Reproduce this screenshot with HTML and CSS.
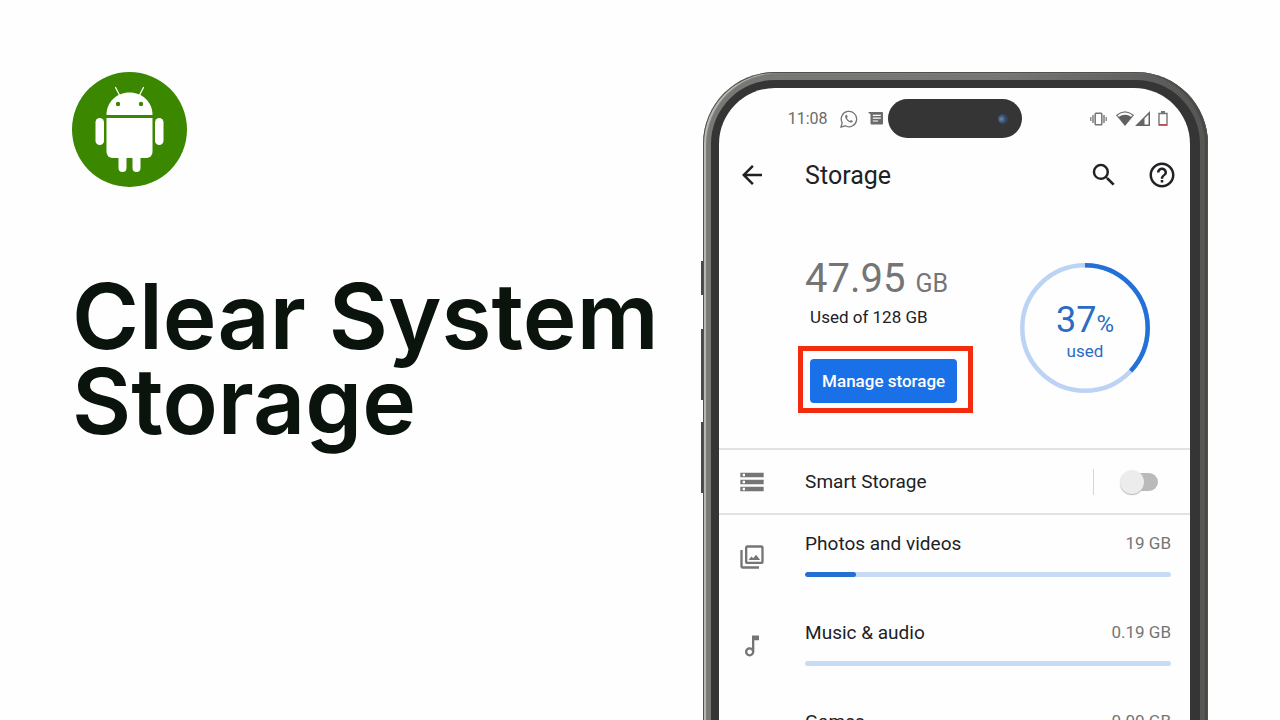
FILE: index.html
```html
<!DOCTYPE html>
<html lang="en">
<head>
<meta charset="utf-8">
<meta name="viewport" content="width=device-width, initial-scale=1">
<title>Clear System Storage</title>
<link rel="stylesheet" href="styles.css">
</head>
<body>
<main class="page">
  <section class="intro">
    <svg class="logo" viewBox="0 0 115 115" role="img" aria-label="Android">
      <circle cx="57.500" cy="57.500" r="57.500" fill="#3b8700"/>
      <g fill="#fff">
        <path d="M34.500 43C34.500 30 44.500 20.500 57.500 20.500S80.500 30 80.500 43Z"/>
        <path d="M34.500 46H80.500V80a6 6 0 0 1-6 6H40.500a6 6 0 0 1-6-6Z"/>
        <rect x="23.500" y="46" width="8.500" height="27" rx="4.250"/>
        <rect x="83" y="46" width="8.500" height="27" rx="4.250"/>
        <path d="M46.500 84H54.500V96a4 4 0 0 1-8 0ZM60.500 84H68.500V96a4 4 0 0 1-8 0Z"/>
      </g>
      <path d="M43.500 15.500L47.500 23M71.500 15.500L67.500 23" stroke="#fff" stroke-width="1.300" stroke-linecap="round"/>
      <circle cx="46" cy="32" r="2.200" fill="#3b8700"/><circle cx="69" cy="32" r="2.200" fill="#3b8700"/>
    </svg>
    <h1 class="headline">Clear System Storage</h1>
  </section>

  <section class="phone">
    <span class="side-key side-key-action"></span>
    <span class="side-key side-key-up"></span>
    <span class="side-key side-key-down"></span>
    <div class="bezel">
      <div class="screen">
        <div class="status">
          <div class="status-left">
            <span class="clock">11:08</span>
            <svg class="icon-18" viewBox="0 0 18 18" fill="none" stroke="#757575">
              <path d="M1 17L2.200 12.800A7.700 7.700 0 1 1 5.200 15.800Z" stroke-width="1.300"/>
              <path d="M6.200 4.700c-1.200.5-1.400 2-.6 3.500 1 1.900 2.400 3.300 4.200 4.100 1.500.6 2.800.2 3.100-1.200l-2-1.200-1 1c-1.300-.5-2.300-1.500-3-2.900l.8-.9-.8-2.200Z" fill="#757575" stroke="none"/>
            </svg>
            <svg class="icon-15" viewBox="0 0 15 13" fill="#6b6b6b">
              <path fill-rule="evenodd" d="M0 0H14a1 1 0 0 1 1 1V11.500a1 1 0 0 1-1 1H3.500a1 1 0 0 1-1-1V2.500ZM4.800 2.800V3.900H12.800V2.800ZM4.800 5.600V6.700H12.800V5.600ZM4.800 8.400V9.500H10V8.400Z"/>
            </svg>
          </div>
          <div class="island"><span class="lens"></span></div>
          <div class="status-right">
            <svg class="icon-17" viewBox="0 0 17 14" fill="none" stroke="#757575">
              <rect x="5.200" y="1.200" width="6.600" height="11.600" rx=".8" stroke-width="1.500"/>
              <path d="M3 3V11M14 3V11" stroke-width="1.400"/><path d="M.8 5V9M16.200 5V9" stroke-width="1.200"/>
            </svg>
            <svg class="icon-wifi" viewBox="0 0 18 15">
              <path d="M.8 4.200Q9-2.600 17.200 4.200L9 14Z" fill="none" stroke="#757575" stroke-width="1.200"/>
              <path d="M2.500 6Q9 1.500 15.500 6L9 14.500Z" fill="#606060"/>
            </svg>
            <svg class="icon-signal" viewBox="0 0 15 15">
              <path d="M0 15L15 0V15ZM9.500 7.500V13.500H13.500V3.500Z" fill="#666" fill-rule="evenodd"/>
            </svg>
            <svg class="icon-battery" viewBox="0 0 10 15">
              <path d="M1 2.500H9V14H1Z" fill="none" stroke="#757575" stroke-width="1.400"/>
              <path d="M3 0H7V2H3Z" fill="#757575"/><path d="M1 13H9V14.700H1Z" fill="#b5564e"/>
            </svg>
          </div>
        </div>

        <header class="appbar">
          <button class="icon-button" type="button" aria-label="Back">
            <svg class="icon-30" viewBox="0 0 24 24" fill="#202124"><path d="M20 11H7.830l5.590-5.590L12 4l-8 8 8 8 1.410-1.410L7.830 13H20v-2z"/></svg>
          </button>
          <h2 class="appbar-title">Storage</h2>
          <button class="icon-button" type="button" aria-label="Search">
            <svg class="icon-30" viewBox="0 0 24 24" fill="#202124"><path d="M15.500 14h-.79l-.28-.27A6.471 6.471 0 0 0 16 9.500 6.500 6.500 0 1 0 9.500 16c1.610 0 3.090-.59 4.230-1.570l.27.28v.79l5 4.990L20.490 19l-4.990-5zm-6 0C7.010 14 5 11.990 5 9.500S7.010 5 9.500 5 14 7.010 14 9.500 11.990 14 9.500 14z"/></svg>
          </button>
          <button class="icon-button" type="button" aria-label="Help">
            <svg class="icon-30" viewBox="0 0 24 24" fill="#202124"><path d="M11 18h2v-2h-2v2zm1-16C6.480 2 2 6.480 2 12s4.480 10 10 10 10-4.480 10-10S17.520 2 12 2zm0 18c-4.410 0-8-3.590-8-8s3.590-8 8-8 8 3.590 8 8-3.590 8-8 8zm0-14c-2.210 0-4 1.790-4 4h2c0-1.100.9-2 2-2s2 .9 2 2c0 2-3 1.750-3 5h2c0-2.250 3-2.500 3-5 0-2.210-1.790-4-4-4z"/></svg>
          </button>
        </header>

        <section class="summary">
          <div class="usage">
            <p class="amount">47.95 <span class="unit">GB</span></p>
            <p class="capacity">Used of 128 GB</p>
            <div class="highlight"><button class="manage" type="button">Manage storage</button></div>
          </div>
          <div class="gauge">
            <svg class="gauge-ring" viewBox="0 0 130 130" fill="none" stroke-width="4.500">
              <circle cx="65" cy="65" r="62.700" stroke="#bcd3f3"/>
              <circle cx="65" cy="65" r="62.700" stroke="#2371d8" pathLength="100" stroke-dasharray="37 63" transform="rotate(-90 65 65)"/>
            </svg>
            <p class="percent">37<span class="percent-sign">%</span></p>
            <p class="gauge-label">used</p>
          </div>
        </section>

        <div class="smart">
          <svg class="icon-row" viewBox="0 0 24 24" fill="#757575"><path d="M2 20h20v-4H2v4zm2-3h2v2H4v-2zM2 4v4h20V4H2zm4 3H4V5h2v2zm-4 7h20v-4H2v4zm2-3h2v2H4v-2z"/></svg>
          <label class="row-title" for="smart">Smart Storage</label>
          <span class="rule"></span>
          <input class="switch" type="checkbox" id="smart">
        </div>

        <ul class="categories">
          <li class="category">
            <svg class="icon-row" viewBox="0 0 24 24" fill="#757575"><path d="M20 4v12H8V4h12m0-2H8c-1.100 0-2 .9-2 2v12c0 1.100.9 2 2 2h12c1.100 0 2-.9 2-2V4c0-1.100-.9-2-2-2zM2 6v14c0 1.100.9 2 2 2h14v-2H4V6H2zM9 14.500l2.500-3 1.500 1.500 2.500-3 3.500 4.500Z"/></svg>
            <div class="category-body">
              <div class="category-text"><label class="row-title" for="photos">Photos and videos</label><span class="size">19 GB</span></div>
              <progress class="meter" id="photos" max="100" value="14"></progress>
            </div>
          </li>
          <li class="category">
            <svg class="icon-row" viewBox="0 0 24 24" fill="#757575"><path d="M12 3l.01 10.550c-.59-.34-1.270-.55-2-.55C7.790 13 6 14.790 6 17s1.790 4 4.010 4S14 19.210 14 17V7h4V3h-6zm-1.990 16c-1.100 0-2-.9-2-2s.9-2 2-2 2 .9 2 2-.9 2-2 2z"/></svg>
            <div class="category-body">
              <div class="category-text"><label class="row-title" for="music">Music &amp; audio</label><span class="size">0.19 GB</span></div>
              <progress class="meter" id="music" max="100" value="0"></progress>
            </div>
          </li>
          <li class="category">
            <svg class="icon-row" viewBox="0 0 24 24" fill="#757575"><path d="M2 7H22V17H2ZM6 9V11H4V13H6V15H8V13H10V11H8V9Z" fill-rule="evenodd"/></svg>
            <div class="category-body">
              <div class="category-text"><label class="row-title" for="games">Games</label><span class="size">0.00 GB</span></div>
              <progress class="meter" id="games" max="100" value="0"></progress>
            </div>
          </li>
        </ul>
      </div>
    </div>
  </section>
</main>
</body>
</html>
```
FILE: styles.css
```css
* { box-sizing: border-box; }

body {
  margin: 0;
  background: #fefefe;
  font-family: Roboto, "Liberation Sans", sans-serif;
  color: #202124;
}

h1, h2, p, ul { margin: 0; padding: 0; }
svg { display: block; flex: none; }

.page {
  display: grid;
  grid-template-columns: minmax(0, 5fr) minmax(0, 4fr);
  align-items: start;
  height: 100vh;
  padding: 72px 72px 0;
  overflow: hidden;
}

.logo { width: 115px; height: 115px; }

.headline {
  margin-top: 87px;
  font-family: Inter, "Liberation Sans", sans-serif;
  font-size: 91px;
  font-weight: 600;
  line-height: 85px;
  color: #0b130d;
}

/* Phone body */
.phone {
  position: relative;
  padding: 8px;
  border-radius: 72px;
  background: linear-gradient(to right, #777974, #767774 60%, #555653);
  box-shadow: inset 0 0 0 1px #50514e, inset 3px 1px 1px 0 #b9bab6, inset -3px 0 1px 0 #484946;
}

.bezel {
  padding: 8px 10px 8px 8px;
  border-radius: 64px;
  background: #353535;
}

.screen {
  padding-bottom: 60px;
  border-radius: 56px;
  background: #fefefe;
}

.side-key {
  position: absolute;
  left: -2px;
  width: 2px;
  height: 71px;
  background: #484848;
}
.side-key-action { top: 189px; height: 34px; }
.side-key-up { top: 257px; }
.side-key-down { top: 350px; }

/* Status bar */
.status {
  display: grid;
  grid-template-columns: 1fr auto 1fr;
  align-items: center;
  padding-top: 11px;
}
.status-left, .status-right {
  display: flex;
  align-items: center;
  justify-content: flex-end;
}
.status-left { gap: 10px; padding-right: 5px; }
.status-right { padding-right: 22px; }
.clock { margin-right: 2px; font-size: 16px; color: #6b6b6b; }

.island {
  display: flex;
  align-items: center;
  justify-content: flex-end;
  width: 134px;
  height: 39px;
  padding-right: 14px;
  border-radius: 20px;
  background: #353535;
}
.lens {
  width: 10px;
  height: 10px;
  border-radius: 50%;
  background: radial-gradient(circle at 35% 50%, #6f89a4, #34496b 50%, #2b3547);
}

.icon-15 { width: 15px; height: 13px; }
.icon-17 { width: 17px; height: 14px; }
.icon-18 { width: 18px; height: 18px; }
.icon-30 { width: 30px; height: 30px; }
.icon-row { width: 28px; height: 28px; }
.icon-wifi { width: 18px; height: 15px; margin-left: 9px; }
.icon-signal { width: 15px; height: 15px; margin-left: 1px; }
.icon-battery { width: 10px; height: 15px; margin-left: 8px; }

/* App bar */
.appbar {
  display: flex;
  align-items: center;
  gap: 28px;
  padding: 21px 13px 0 18px;
}
.icon-button {
  padding: 0;
  border: 0;
  background: none;
}
.appbar-title {
  flex: 1;
  padding-top: 2px;
  margin-left: 10px;
  font-size: 25px;
  font-weight: 400;
  line-height: 30px;
}

/* Usage summary */
.summary {
  display: flex;
  justify-content: space-between;
  align-items: flex-start;
  padding: 65px 40px 35px 79px;
  border-bottom: 2px solid #e2e2e2;
}
.amount {
  padding-left: 7px;
  font-size: 40px;
  line-height: 46px;
  color: #757575;
}
.unit { font-size: 25px; }
.capacity {
  padding-left: 12px;
  margin-bottom: 19px;
  font-size: 17px;
  line-height: 20px;
}
.highlight {
  padding: 8px 11px 5px 7px;
  border: 5px solid #f22c0c;
}
.manage {
  display: block;
  height: 44px;
  padding: 0 12px;
  border: 0;
  border-radius: 4px;
  background: #1a70e6;
  font: 500 17px/44px Roboto, sans-serif;
  color: #fff;
  white-space: nowrap;
}

.gauge {
  display: grid;
  grid-template-rows: 79px 51px;
  justify-items: center;
  margin-top: 7px;
  color: #2a6cc4;
}
.gauge > * { grid-column: 1; }
.gauge-ring { grid-row: 1 / 3; width: 130px; height: 130px; }
.percent {
  grid-row: 1;
  align-self: end;
  font-size: 36px;
  line-height: 36px;
}
.percent-sign { font-size: 24px; }
.gauge-label {
  grid-row: 2;
  font-size: 17px;
  line-height: 18px;
}

/* Rows */
.row-title { font-size: 19px; line-height: 28px; }

.smart {
  display: flex;
  align-items: center;
  height: 65px;
  padding: 0 32px 0 19px;
  border-bottom: 2px solid #e2e2e2;
}
.smart .row-title { flex: 1; margin-left: 39px; }
.rule { width: 1px; height: 26px; margin-right: 26px; background: #d6d6d6; }

.switch {
  display: flex;
  align-items: center;
  appearance: none;
  width: 30px;
  height: 18px;
  margin: 0 0 0 8px;
  border-radius: 9px;
  background: #bababa;
}
.switch::before {
  content: "";
  flex: none;
  width: 24px;
  height: 24px;
  margin-left: -8px;
  border-radius: 50%;
  background: #ececec;
  box-shadow: 0 1px 1px #b5b5b5;
}

.categories { list-style: none; }
.category {
  display: flex;
  align-items: flex-start;
  gap: 39px;
  height: 89px;
  padding: 15px 19px 0;
}
.category .icon-row { margin-top: 13px; }
.category-body { flex: 1; }
.category-text { display: flex; justify-content: space-between; }
.size { font-size: 17px; line-height: 26px; color: #757575; }

.meter {
  display: block;
  appearance: none;
  width: 100%;
  height: 5px;
  margin-top: 14px;
  border: 0;
  border-radius: 3px;
  overflow: hidden;
  background: #c8dbf4;
}
.meter::-webkit-progress-bar { background: #c8dbf4; }
.meter::-webkit-progress-value { border-radius: 3px; background: #236fd2; }
```
